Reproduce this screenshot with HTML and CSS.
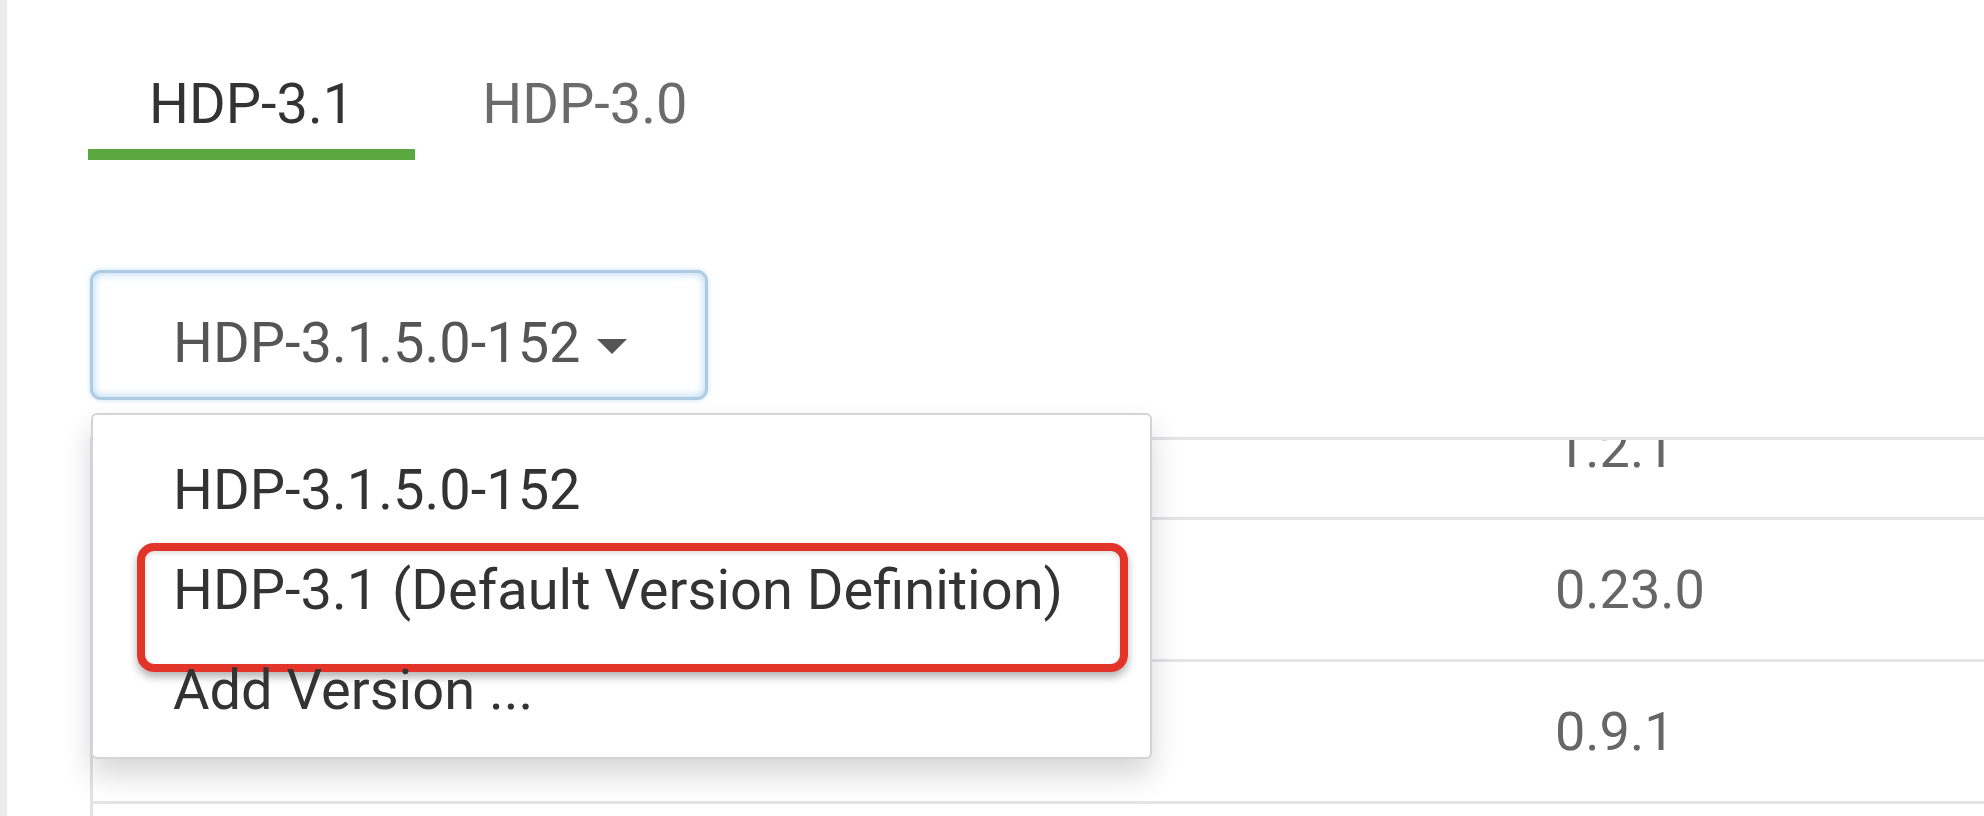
FILE: index.html
```html
<!DOCTYPE html>
<html lang="en">
<head>
<meta charset="utf-8">
<title>Versions</title>
<link rel="stylesheet" href="styles.css">
</head>
<body>
<div class="app">
  <div class="edge"></div>
  <main class="content">
    <ul class="tabs">
      <li class="tab active">HDP-3.1</li>
      <li class="tab">HDP-3.0</li>
    </ul>
    <div class="version-select">
      <button class="select-btn" type="button"><span class="label">HDP-3.1.5.0-152</span><span class="caret"></span></button>
      <ul class="menu">
        <li class="item">HDP-3.1.5.0-152</li>
        <li class="item marked">HDP-3.1 (Default Version Definition)</li>
        <li class="item">Add Version ...</li>
      </ul>
    </div>
    <div class="table">
      <div class="row row-clipped"><div class="cell"></div><div class="cell val">1.2.1</div></div>
      <div class="row"><div class="cell"></div><div class="cell val">0.23.0</div></div>
      <div class="row"><div class="cell"></div><div class="cell val">0.9.1</div></div>
      <div class="row row-next"><div class="cell"></div><div class="cell val"></div></div>
    </div>
  </main>
</div>
</body>
</html>
```
FILE: styles.css
```css
html, body {
  margin: 0;
  padding: 0;
  background: #ffffff;
  height: 100%;
  overflow: hidden;
}
body {
  font-family: Roboto, "Liberation Sans", Arial, sans-serif;
  color: #333333;
}
.app {
  display: flex;
  height: 816px;
  overflow: hidden;
}
.edge {
  width: 7px;
  flex: none;
  background: #ececec;
}
.content {
  flex: 1;
  padding-left: 81px;
  min-width: 0;
  overflow: hidden;
}
.tabs {
  list-style: none;
  margin: 0;
  padding: 71px 0 0 0;
  display: flex;
}
.tab {
  font-size: 56px;
  line-height: 66px;
  padding: 0 61px 12px;
  border-bottom: 11px solid transparent;
  color: #6b6b6b;
}
.tab + .tab {
  padding-left: 67px;
}
.tab.active {
  color: #333333;
  border-bottom-color: #5aa83f;
}
.version-select {
  position: relative;
  margin: 110px 0 0 2px;
  width: max-content;
}
.select-btn {
  display: flex;
  align-items: center;
  font-family: inherit;
  font-size: 56px;
  line-height: 66px;
  color: #555555;
  background: #ffffff;
  border: 3px solid #aecbe2;
  border-radius: 11px;
  padding: 37px 78px 21px 80px;
  box-shadow: inset 0 0 10px rgba(102, 175, 233, 0.55), 0 0 5px rgba(102, 175, 233, 0.35);
  cursor: pointer;
}
.caret {
  width: 0;
  height: 0;
  margin: 6px 0 0 16px;
  border-top: 15px solid #555555;
  border-left: 15.5px solid transparent;
  border-right: 15.5px solid transparent;
}
.menu {
  position: absolute;
  top: calc(100% + 13px);
  left: 1px;
  z-index: 5;
  width: 1057px;
  margin: 0;
  list-style: none;
  padding: 25px 0 17px;
  background: #ffffff;
  border: 2px solid #d4d4d8;
  border-radius: 6px;
  box-shadow: 0 16px 30px rgba(0, 0, 0, 0.16);
}
.item {
  position: relative;
  font-size: 56px;
  line-height: 66px;
  padding: 17px 80px;
  color: #333333;
  white-space: nowrap;
}
.item.marked::after {
  content: "";
  position: absolute;
  left: 44px;
  top: 3px;
  width: 975px;
  height: 113px;
  border: 8px solid #e3342a;
  border-radius: 17px;
  box-shadow: 0 5px 8px rgba(0, 0, 0, 0.3), inset 0 2px 5px rgba(0, 0, 0, 0.15);
}
.table {
  margin: 37px 0 0 2px;
  border-left: 3px solid #e2e2e4;
}
.row {
  display: grid;
  grid-template-columns: 1462px 1fr;
  align-items: center;
  height: 139px;
  border-top: 3px solid #e4e4e6;
  overflow: hidden;
}
.row-clipped {
  height: 42px;
  grid-template-rows: 42px;
  padding-bottom: 35px;
  align-items: end;
}
.val {
  font-size: 54px;
  line-height: 66px;
  color: #666666;
}
```
